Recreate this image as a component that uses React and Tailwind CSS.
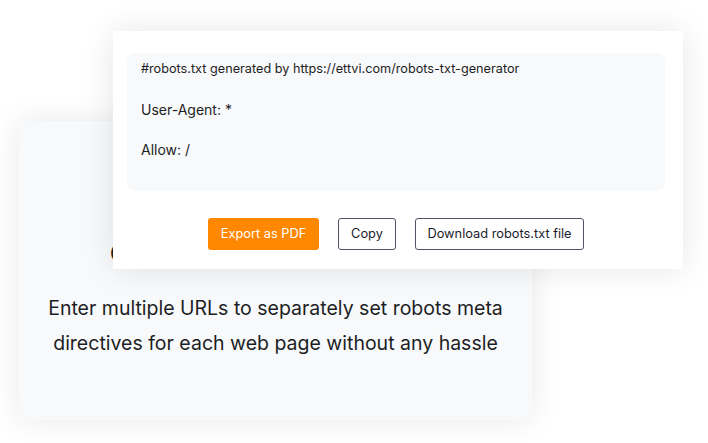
import React from "react";

export default function App() {
  return (
    <div className="relative w-[708px] h-[443px] overflow-hidden bg-white font-['Inter','Liberation_Sans',sans-serif] text-[#1d1f24]">
      {/* back card */}
      <div className="ml-[19px] mt-[121px] w-[513px] h-[299px] bg-[#f8f9fb] shadow-[0_0_28px_rgba(0,0,0,0.09)] flex flex-col items-center pt-[117px]">
        <h2 className="text-[24px] leading-[32px] font-semibold whitespace-nowrap tracking-[0.6px]">Customize Robots for URLs</h2>
        <p className="mt-[21px] text-center text-[19.5px] leading-[35px] px-4">
          Enter multiple URLs to separately set robots meta
          <br />
          directives for each web page without any hassle
        </p>
      </div>

      {/* front card */}
      <div className="absolute left-[113px] top-[31px] w-[570px] h-[238px] bg-white shadow-[0_0_30px_rgba(0,0,0,0.1)] pt-[22px] pl-[14px] pr-[18px]">
        <div className="h-[138px] rounded-[8px] bg-[#f8f9fb] pl-[14px] pt-[6px]">
          <div className="text-[12.7px] leading-[20px]">#robots.txt generated by https://ettvi.com/robots-txt-generator</div>
          <div className="h-[21px]" />
          <div className="text-[14px] leading-[20px]">User-Agent: *</div>
          <div className="h-[20px]" />
          <div className="text-[14px] leading-[20px]">Allow: /</div>
        </div>
        <div className="mt-[27px] flex justify-center gap-[19px] text-[12.8px] text-[#1a1c2b]">
          <button className="h-[32px] w-[111px] rounded-[3px] bg-[#ff8800] text-white">Export as PDF</button>
          <button className="h-[32px] w-[58px] rounded-[3px] border border-[#50546a] bg-white">Copy</button>
          <button className="h-[32px] w-[169px] rounded-[3px] border border-[#50546a] bg-white">Download robots.txt file</button>
        </div>
      </div>
    </div>
  );
}
